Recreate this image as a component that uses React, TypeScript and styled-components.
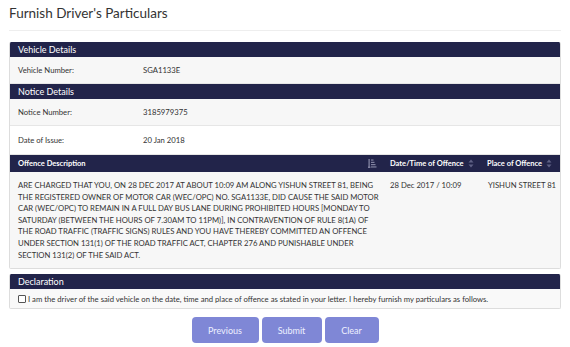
import React from "react";
import styled, { createGlobalStyle } from "styled-components";

const Global = createGlobalStyle`
  html, body { margin: 0; padding: 0; background: #fff; }
  body { font-family: Lato, "Open Sans", "Liberation Sans", sans-serif; color: #333; }
  * { box-sizing: border-box; }
`;

const Page = styled.div`
  width: 570px;
  padding: 0 9px;
`;

const Title = styled.h1`
  margin: 0;
  padding: 5px 0 0;
  height: 31px;
  font-size: 13.5px;
  font-weight: 400;
  line-height: 17px;
  color: #333;
  border-bottom: 1px solid #eee;
`;

const Panel = styled.section<{ $mt?: number }>`
  margin-top: ${(p) => p.$mt ?? 0}px;
  border: 1px solid #ddd;
  border-top: none;
  border-radius: 2px;
  overflow: hidden;
`;

const Heading = styled.div`
  height: 15px;
  background: #22244a;
  color: #fff;
  font-size: 9px;
  line-height: 15px;
  padding: 0 8px;
`;

const Row = styled.div<{ $alt?: boolean; $h?: number }>`
  display: flex;
  align-items: center;
  height: ${(p) => p.$h ?? 27}px;
  padding: 0 8px;
  background: ${(p) => (p.$alt ? "#fff" : "#f7f7f7")};
  border-bottom: 1px solid #e6e6e6;
  font-size: 7.7px;
`;

const Label = styled.span`
  width: 125px;
  flex: none;
`;

const Value = styled.span``;

const Table = styled.table`
  width: 100%;
  border-collapse: collapse;
  table-layout: fixed;
  font-size: 7.7px;
`;

const Th = styled.th<{ $pl?: number }>`
  background: #22244a;
  color: #fff;
  font-weight: 700;
  font-size: 7.5px;
  text-align: left;
  height: 17px;
  padding: 0 8px 0 ${(p) => p.$pl ?? 5}px;
  white-space: nowrap;
`;

const ThInner = styled.div`
  display: flex;
  align-items: center;
  justify-content: space-between;
`;

const Td = styled.td<{ $pl?: number; $nowrap?: boolean }>`
  background: #f7f7f7;
  vertical-align: top;
  padding: 8px ${(p) => (p.$nowrap ? 0 : 6)}px 7px ${(p) => p.$pl ?? 5}px;
  line-height: 11.6px;
  white-space: ${(p) => (p.$nowrap ? "nowrap" : "normal")};
`;

const Declaration = styled.label`
  display: flex;
  align-items: center;
  gap: 2px;
  height: 19px;
  padding: 0 8px;
  background: #f9f9f9;
  font-size: 7.7px;
  color: #333;
`;

const Check = styled.span`
  width: 8px;
  height: 8px;
  border: 1px solid #555;
  border-radius: 1px;
  background: #fff;
  flex: none;
`;

const Buttons = styled.div`
  display: flex;
  justify-content: center;
  gap: 3px;
  margin-top: 8px;
`;

const Button = styled.button<{ $w: number }>`
  width: ${(p) => p.$w}px;
  height: 26px;
  border: none;
  border-radius: 4px;
  background: #7f87d6;
  color: #eef0ff;
  font-family: inherit;
  font-size: 9px;
  padding: 0;
`;

const SortLines = () => (
  <svg width="9" height="9" viewBox="0 0 9 9">
    <g fill="#8a8ca8">
      <rect x="0.5" y="0" width="1.2" height="9" />
      <rect x="0" y="7.6" width="2.4" height="1.2" />
      <rect x="3" y="0.5" width="2.5" height="1.1" />
      <rect x="3" y="2.8" width="3.5" height="1.1" />
      <rect x="3" y="5.1" width="4.5" height="1.1" />
      <rect x="3" y="7.4" width="5.5" height="1.1" />
    </g>
  </svg>
);

const SortBoth = () => (
  <svg width="6" height="9" viewBox="0 0 6 9">
    <g fill="#5f6185">
      <path d="M3 0.5 L5.5 3.5 L0.5 3.5 Z" />
      <path d="M3 8.5 L5.5 5.5 L0.5 5.5 Z" />
    </g>
  </svg>
);

export default function App() {
  return (
    <Page>
      <Global />
      <Title>Furnish Driver's Particulars</Title>
      <Panel $mt={11}>
        <Heading>Vehicle Details</Heading>
        <Row>
          <Label>Vehicle Number:</Label>
          <Value>SGA1133E</Value>
        </Row>
        <Heading>Notice Details</Heading>
        <Row>
          <Label>Notice Number:</Label>
          <Value>3185979375</Value>
        </Row>
        <Row $alt $h={29}>
          <Label>Date of Issue:</Label>
          <Value>20 Jan 2018</Value>
        </Row>
        <Table>
          <colgroup>
            <col style={{ width: 375 }} />
            <col style={{ width: 97 }} />
            <col />
          </colgroup>
          <thead>
            <tr>
              <Th $pl={8}>
                <ThInner>
                  Offence Description <SortLines />
                </ThInner>
              </Th>
              <Th>
                <ThInner>
                  Date/Time of Offence <SortBoth />
                </ThInner>
              </Th>
              <Th>
                <ThInner>
                  Place of Offence <SortBoth />
                </ThInner>
              </Th>
            </tr>
          </thead>
          <tbody>
            <tr>
              <Td $pl={8}>
                ARE CHARGED THAT YOU, ON 28 DEC 2017 AT ABOUT 10:09 AM ALONG YISHUN STREET 81, BEING THE
                REGISTERED OWNER OF MOTOR CAR (WEC/OPC) NO. SGA1133E, DID CAUSE THE SAID MOTOR CAR
                (WEC/OPC) TO REMAIN IN A FULL DAY BUS LANE DURING PROHIBITED HOURS [MONDAY TO SATURDAY
                (BETWEEN THE HOURS OF 7.30AM TO 11PM)], IN CONTRAVENTION OF RULE 8(1A) OF THE ROAD TRAFFIC
                (TRAFFIC SIGNS) RULES AND YOU HAVE THEREBY COMMITTED AN OFFENCE UNDER SECTION 131(1) OF THE
                ROAD TRAFFIC ACT, CHAPTER 276 AND PUNISHABLE UNDER SECTION 131(2) OF THE SAID ACT.
              </Td>
              <Td>28 Dec 2017 / 10:09</Td>
              <Td $pl={6} $nowrap>YISHUN STREET 81</Td>
            </tr>
          </tbody>
        </Table>
      </Panel>
      <Panel $mt={5}>
        <Heading>Declaration</Heading>
        <Declaration>
          <Check />
          I am the driver of the said vehicle on the date, time and place of offence as stated in your
          letter. I hereby furnish my particulars as follows.
        </Declaration>
      </Panel>
      <Buttons>
        <Button $w={67}>Previous</Button>
        <Button $w={60}>Submit</Button>
        <Button $w={54}>Clear</Button>
      </Buttons>
    </Page>
  );
}
